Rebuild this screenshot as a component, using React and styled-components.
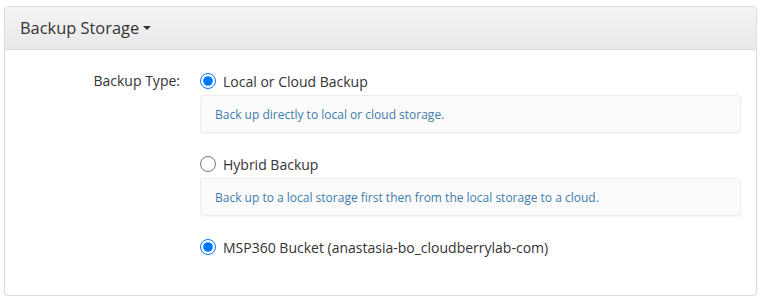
import React from "react";
import styled, { createGlobalStyle } from "styled-components";

const GlobalStyle = createGlobalStyle`
	body {
		margin: 0;
		background: #fff;
		font-family: "Open Sans", "Noto Sans", sans-serif;
		color: #333;
	}
`;

function App() {
	let tipos = [
		{ id: "local", nombre: "Local or Cloud Backup", desc: "Back up directly to local or cloud storage.", checked: true },
		{ id: "hybrid", nombre: "Hybrid Backup", desc: "Back up to a local storage first then from the local storage to a cloud.", checked: false },
		{ id: "msp", nombre: "MSP360 Bucket (anastasia-bo_cloudberrylab-com)", checked: true },
	];

	return (
		<Page>
			<GlobalStyle />
			<Panel>
				<PanelHeader>
					<Title>Backup Storage</Title>
					<Caret />
				</PanelHeader>
				<PanelBody>
					<FormRow>
						<Label>Backup Type:</Label>
						<Options>
							{tipos.map((t) => (
								<Option key={t.id}>
									<RadioLine>
										<Radio type="radio" name={t.id} defaultChecked={t.checked} />
										<RadioText>{t.nombre}</RadioText>
									</RadioLine>
									{t.desc && <Well>{t.desc}</Well>}
								</Option>
							))}
						</Options>
					</FormRow>
				</PanelBody>
			</Panel>
		</Page>
	);
}

export default App;

const Page = styled.div`
	padding: 6px 6px 0 4px;
`;

const Panel = styled.div`
	width: 753px;
	height: 290px;
	box-sizing: border-box;
	border: 1px solid #dcdcdc;
	border-radius: 4px;
	background: #fff;
	box-shadow: 0 1px 2px rgba(0, 0, 0, 0.06);
	overflow: hidden;
`;

const PanelHeader = styled.div`
	height: 43px;
	box-sizing: border-box;
	display: flex;
	align-items: center;
	padding: 0 15px 2px 15px;
	background: linear-gradient(to bottom, #f5f5f5 0%, #e8e8e8 100%);
	border-bottom: 1px solid #dcdcdc;
`;

const Title = styled.span`
	font-size: 16.4px;
	color: #333;
`;

const Caret = styled.span`
	display: inline-block;
	width: 0;
	height: 0;
	margin-left: 4px;
	margin-top: 2px;
	border-top: 4px solid #333;
	border-left: 4px solid transparent;
	border-right: 4px solid transparent;
`;

const PanelBody = styled.div`
	padding: 20px 15px 0 0;
`;

const FormRow = styled.div`
	display: flex;
	align-items: flex-start;
`;

const Label = styled.div`
	width: 175px;
	text-align: right;
	font-size: 14px;
	line-height: 22px;
	color: #333;
`;

const Options = styled.div`
	flex: 1;
	margin-left: 20px;
	display: flex;
	flex-direction: column;
	gap: 20px;
`;

const Option = styled.div`
	display: flex;
	flex-direction: column;
	gap: 3px;
`;

const RadioLine = styled.label`
	display: flex;
	align-items: center;
	height: 22px;
`;

const Radio = styled.input`
	width: 16px;
	height: 16px;
	margin: 0 7px 0 0;
	accent-color: #0075ff;
`;

const RadioText = styled.span`
	font-size: 14px;
	color: #333;
`;

const Well = styled.div`
	height: 38px;
	box-sizing: border-box;
	display: flex;
	align-items: center;
	padding: 0 14px;
	background: #fbfbfb;
	border: 1px solid #ececec;
	border-radius: 4px;
	box-shadow: 0 1px 1px rgba(0, 0, 0, 0.04);
	font-size: 12px;
	color: #3f7cab;
`;
